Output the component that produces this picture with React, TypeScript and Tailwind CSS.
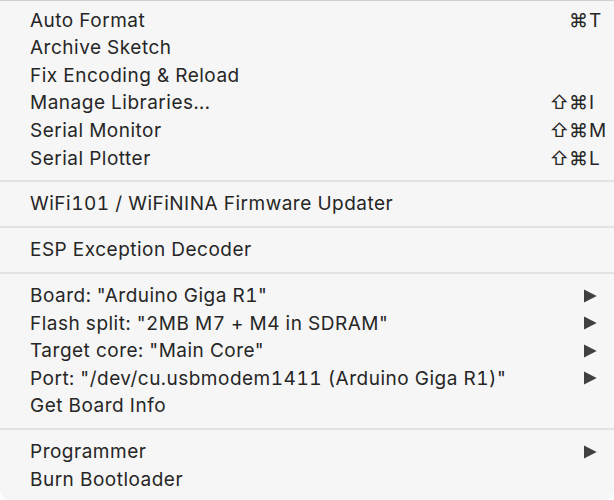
import React from "react";

type Item =
  | { type: "sep" }
  | { type: "item"; label: string; mods?: string; key?: string; arrow?: boolean };

const items: Item[] = [
  { type: "item", label: "Auto Format", mods: "⌘", key: "T" },
  { type: "item", label: "Archive Sketch" },
  { type: "item", label: "Fix Encoding & Reload" },
  { type: "item", label: "Manage Libraries...", mods: "⇧⌘", key: "I" },
  { type: "item", label: "Serial Monitor", mods: "⇧⌘", key: "M" },
  { type: "item", label: "Serial Plotter", mods: "⇧⌘", key: "L" },
  { type: "sep" },
  { type: "item", label: "WiFi101 / WiFiNINA Firmware Updater" },
  { type: "sep" },
  { type: "item", label: "ESP Exception Decoder" },
  { type: "sep" },
  { type: "item", label: 'Board: "Arduino Giga R1"', arrow: true },
  { type: "item", label: 'Flash split: "2MB M7 + M4 in SDRAM"', arrow: true },
  { type: "item", label: 'Target core: "Main Core"', arrow: true },
  { type: "item", label: 'Port: "/dev/cu.usbmodem1411 (Arduino Giga R1)"', arrow: true },
  { type: "item", label: "Get Board Info" },
  { type: "sep" },
  { type: "item", label: "Programmer", arrow: true },
  { type: "item", label: "Burn Bootloader" },
];

function Arrow() {
  return (
    <svg width="13" height="14" viewBox="0 0 13 14" className="mr-[11px]">
      <polygon points="0,0.5 12.7,7 0,13.5" fill="#404040" />
    </svg>
  );
}

export default function App() {
  return (
    <div className="w-[614px] h-[500px] bg-white overflow-hidden">
      <div
        className="h-[500px] bg-[#f6f6f6] border-t border-[#cfcfcf] rounded-b-[10px] pt-[5.6px] text-[19px] text-[#262626]"
        style={{ fontFamily: "Inter, 'DejaVu Sans', sans-serif" }}
      >
        {items.map((it, i) =>
          it.type === "sep" ? (
            <div key={i} className="h-[18.2px] flex items-center">
              <div className="h-[2px] w-full bg-[#e3e3e3]" />
            </div>
          ) : (
            <div key={i} className="h-[27.6px] leading-[27.6px] flex items-center pl-[30px] pr-[6px]">
              <div className="flex-1 whitespace-nowrap tracking-[0.5px] tabular-nums">{it.label}</div>
              <div className="w-[70px] flex items-center justify-end">
                {it.arrow ? (
                  <Arrow />
                ) : it.key ? (
                  <>
                    <span className="flex-1 text-right">{it.mods}</span>
                    <span className="w-[20px] pl-[1px]">{it.key}</span>
                  </>
                ) : null}
              </div>
            </div>
          )
        )}
      </div>
    </div>
  );
}
